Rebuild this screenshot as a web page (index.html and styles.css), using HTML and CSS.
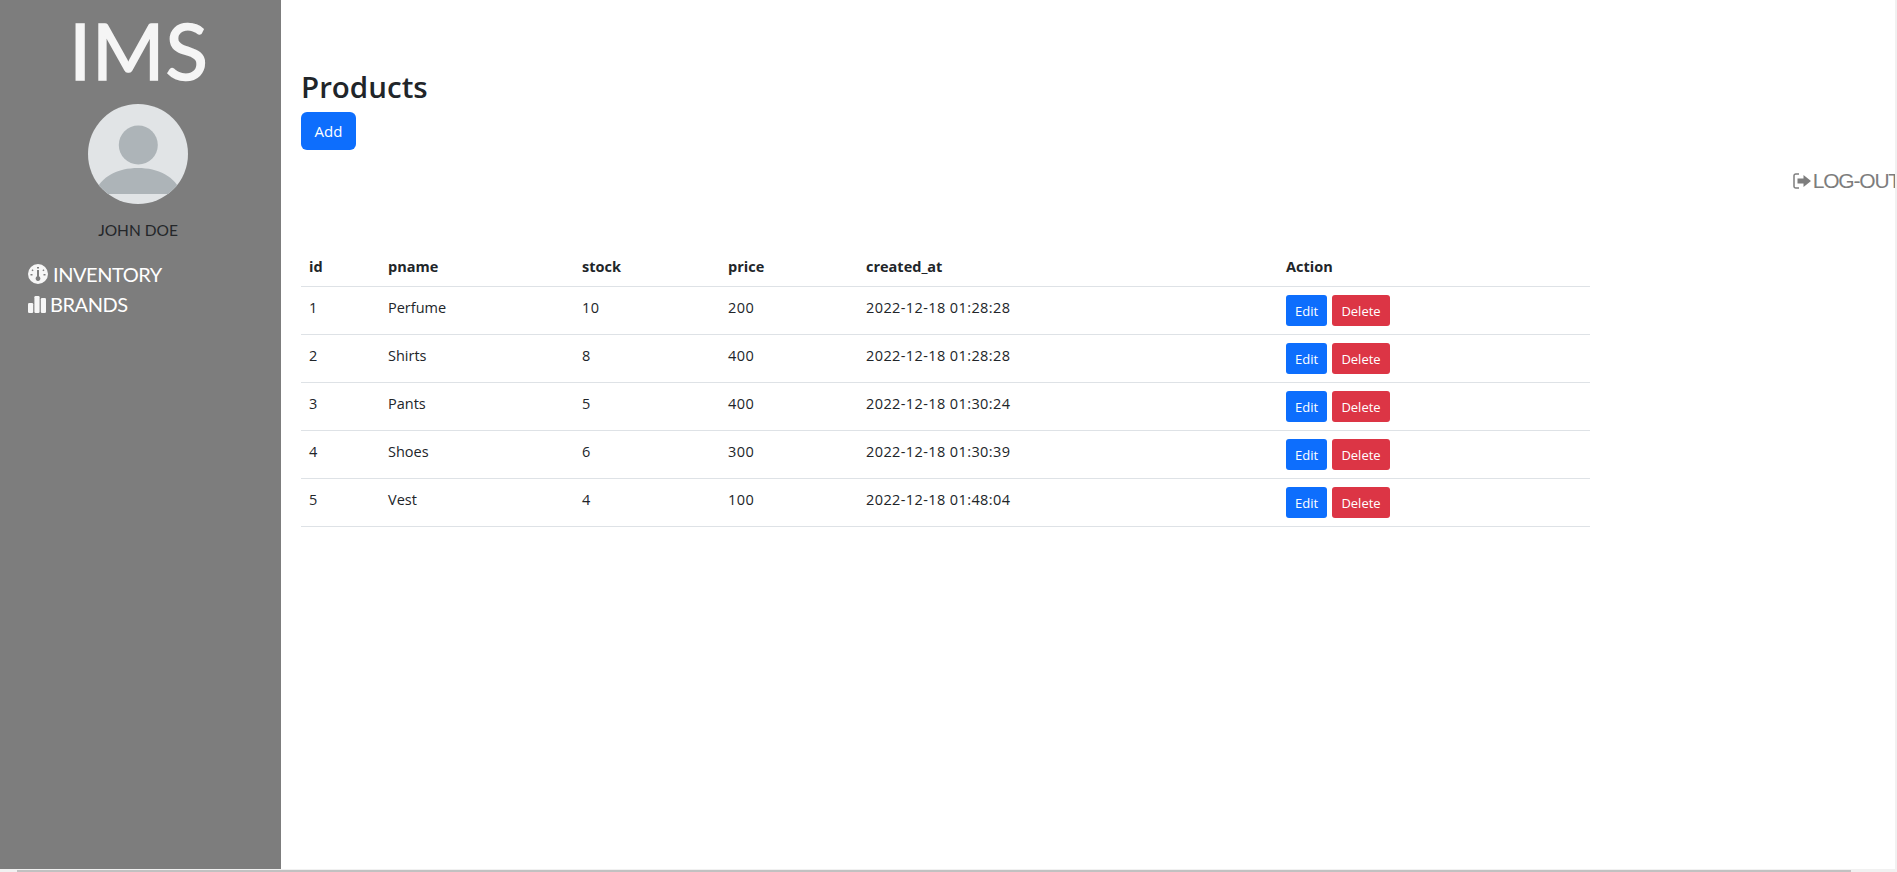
FILE: index.html
```html
<!DOCTYPE html>
<html lang="en">
<head>
<meta charset="utf-8">
<title>IMS - Products</title>
<link rel="stylesheet" href="styles.css">
</head>
<body>
<div class="viewport">
  <aside class="sidebar">
    <h1 class="brand">IMS</h1>
    <svg class="avatar" viewBox="0 0 100 100" aria-hidden="true">
      <defs><clipPath id="face"><circle cx="50" cy="50" r="50"/></clipPath></defs>
      <circle cx="50" cy="50" r="50" fill="#e1e4e6"/>
      <g clip-path="url(#face)">
        <circle cx="50.300" cy="41" r="19.500" fill="#adb4b8"/>
        <path d="M6 90C13 72 30 64 50 64s37 8 44 26z" fill="#adb4b8"/>
      </g>
    </svg>
    <p class="user">JOHN DOE</p>
    <nav class="nav">
      <a class="nav-link" href="#">
        <svg class="nav-icon" viewBox="0 0 20 20" aria-hidden="true"><path fill="#f6f6f6" fill-rule="evenodd" d="M10 0a10 10 0 1 1 0 20 10 10 0 0 1 0-20zM9 3v1.500h2V3zM4.500 5.200 3.500 6.200l1.100 1.100 1-1zM15.500 5.200l-1.100 1.100 1 1 1.100-1.100zM2.500 10v1.500h2V10zM15.500 10v1.500h2V10zM9 6v6.300a2.400 2.400 0 1 0 2 0V6z"/></svg>
        INVENTORY
      </a>
      <a class="nav-link" href="#">
        <svg class="nav-icon nav-icon-bars" viewBox="0 0 18 17" aria-hidden="true"><rect x="0" y="7" width="5.200" height="10" rx="1.200" fill="#f6f6f6"/><rect x="6.400" y="0" width="5.200" height="17" rx="1.200" fill="#f6f6f6"/><rect x="12.800" y="2" width="5.200" height="15" rx="1.200" fill="#f6f6f6"/></svg>
        BRANDS
      </a>
    </nav>
  </aside>
  <main class="content">
    <h2 class="title">Products</h2>
    <a class="btn btn-primary btn-add" href="#">Add</a>
    <div class="logout-row">
      <a class="logout" href="#">
        <svg class="logout-icon" viewBox="0 0 18 16" aria-hidden="true"><path d="M6 1H2.800A1.800 1.800 0 0 0 1 2.800v10.400A1.800 1.800 0 0 0 2.800 15H6" fill="none" stroke="#7d7d7d" stroke-width="1.500"/><path d="M4.500 5.500h6V2L18 8l-7.500 6v-3.500h-6z" fill="#7d7d7d"/></svg>
        LOG-OUT
      </a>
    </div>
    <table class="table">
      <thead>
        <tr><th class="c-id">id</th><th class="c-name">pname</th><th class="c-stock">stock</th><th class="c-price">price</th><th class="c-date">created_at</th><th>Action</th></tr>
      </thead>
      <tbody>
        <tr><td class="num">1</td><td>Perfume</td><td class="num">10</td><td class="num">200</td><td class="num">2022-12-18 01:28:28</td><td><span class="actions"><a class="btn btn-sm btn-primary" href="#">Edit</a><a class="btn btn-sm btn-danger" href="#">Delete</a></span></td></tr>
        <tr><td class="num">2</td><td>Shirts</td><td class="num">8</td><td class="num">400</td><td class="num">2022-12-18 01:28:28</td><td><span class="actions"><a class="btn btn-sm btn-primary" href="#">Edit</a><a class="btn btn-sm btn-danger" href="#">Delete</a></span></td></tr>
        <tr><td class="num">3</td><td>Pants</td><td class="num">5</td><td class="num">400</td><td class="num">2022-12-18 01:30:24</td><td><span class="actions"><a class="btn btn-sm btn-primary" href="#">Edit</a><a class="btn btn-sm btn-danger" href="#">Delete</a></span></td></tr>
        <tr><td class="num">4</td><td>Shoes</td><td class="num">6</td><td class="num">300</td><td class="num">2022-12-18 01:30:39</td><td><span class="actions"><a class="btn btn-sm btn-primary" href="#">Edit</a><a class="btn btn-sm btn-danger" href="#">Delete</a></span></td></tr>
        <tr><td class="num">5</td><td>Vest</td><td class="num">4</td><td class="num">100</td><td class="num">2022-12-18 01:48:04</td><td><span class="actions"><a class="btn btn-sm btn-primary" href="#">Edit</a><a class="btn btn-sm btn-danger" href="#">Delete</a></span></td></tr>
      </tbody>
    </table>
  </main>
  <div class="scroll-y"></div>
</div>
<div class="scroll-x"><div class="scroll-thumb"></div></div>
</body>
</html>
```
FILE: styles.css
```css
* { box-sizing: border-box; }
html, body { margin: 0; height: 100%; overflow: hidden; background: #fff; }
body { display: flex; flex-direction: column; font-family: "Open Sans", "Noto Sans", sans-serif; font-size: 16px; color: #212529; }
.viewport { flex: 1; display: flex; min-height: 0; }
.sidebar { flex: 0 0 281px; background: #7d7d7d; display: flex; flex-direction: column; align-items: center; padding-right: 5px; }
.brand { margin: 0 0 4px 2px; font: 400 78px/100px Lato, sans-serif; letter-spacing: 1px; color: #f5f5f5; -webkit-text-stroke: 1.600px #f5f5f5; }
.avatar { width: 100px; height: 100px; display: block; }
.user { margin: 15px 0 0; font: 400 15.500px/22px Lato, sans-serif; color: #24272a; }
.nav { align-self: stretch; display: flex; flex-direction: column; gap: 8px; padding: 22px 0 0 28px; }
.nav-link { display: flex; align-items: center; gap: 5px; font: 400 20px/22px Lato, sans-serif; letter-spacing: -0.450px; color: #fff; text-decoration: none; }
.nav-icon { width: 20px; height: 20px; }
.nav-icon-bars { width: 18px; height: 17px; margin-right: -1px; }
.content { flex: 1; min-width: 0; padding: 67px 0 0 20px; overflow: hidden; }
.title { margin: 0; font: 600 29.500px/40px "Open Sans", sans-serif; color: #212529; }
.btn { display: inline-block; color: #fff; text-decoration: none; text-align: center; }
.btn-primary { background: #0d6efd; }
.btn-danger { background: #dc3545; }
.btn-add { margin-top: 5px; width: 55px; height: 38px; font-size: 15px; line-height: 38px; border-radius: 6px; }
.logout-row { display: flex; justify-content: flex-end; margin-top: 16px; height: 30px; }
.logout { flex: none; display: flex; align-items: center; gap: 2px; margin-right: -5px; font: 400 21px/30px "Liberation Sans", sans-serif; letter-spacing: -1.200px; color: #7d7d7d; text-decoration: none; }
.logout-icon { width: 18px; height: 16px; }
.table { width: 1289px; margin-top: 50px; border-collapse: collapse; table-layout: fixed; font-size: 14.500px; line-height: 24px; }
th, td { text-align: left; vertical-align: top; border-bottom: 1px solid #dee2e6; }
th { padding: 9px 8px 7px; font-weight: 700; }
td { padding: 9px 8px 8px; }
.num { letter-spacing: 0.400px; }
.c-id { width: 79px; }
.c-name { width: 194px; }
.c-stock { width: 146px; }
.c-price { width: 138px; }
.c-date { width: 420px; }
.actions { display: flex; gap: 5px; margin-top: -1px; }
.btn-sm { height: 31px; padding-top: 1px; line-height: 30px; font-size: 13px; border-radius: 3px; }
.btn-sm.btn-primary { width: 41px; }
.btn-sm.btn-danger { width: 58px; }
.scroll-y { flex: 0 0 2px; background: #f1f1f1; }
.scroll-x { flex: 0 0 3px; background: #f1f1f1; padding: 1px 46px 0 17px; }
.scroll-thumb { height: 2px; background: #c1c1c1; }
```
